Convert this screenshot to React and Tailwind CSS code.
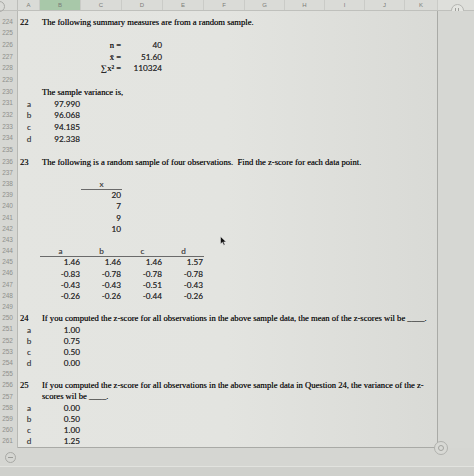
import React from "react";

const COLS = [
  { key: "A", w: "w-[22px]" },
  { key: "B", w: "w-[41px]" },
  { key: "C", w: "w-[41px]" },
  { key: "D", w: "w-[41px]" },
  { key: "E", w: "w-[41px]" },
  { key: "F", w: "w-[41px]" },
  { key: "G", w: "w-[40px]" },
  { key: "H", w: "w-[40px]" },
  { key: "I", w: "w-[40px]" },
  { key: "J", w: "w-[40px]" },
  { key: "K", w: "w-[33px]" },
];

const serif = "font-['Liberation_Serif',serif] text-[8.6px] text-[#1c1c1c] [text-shadow:0_0_0.5px_#333]";
const num = "font-['Lato',sans-serif] text-[8.2px] text-[#333] [text-shadow:0_0_0.4px_#555]";
const letter = "font-['Lato',sans-serif] text-[8.2px] text-[#4a4a4a] [text-shadow:0_0_0.4px_#777]";

const opt = (l, v) => [
  { c: 0, t: l, cls: letter, a: "c" },
  { c: 1, t: v, cls: num, a: "r" },
];

const zrow = (vals) => vals.map((v, i) => ({ c: i + 1, t: v, cls: num, a: "r" }));

const ROWS = [
  [
    { c: 0, t: "22", cls: serif, pl: true },
    { c: 1, t: "The following summary measures are from a random sample.", cls: serif, pl: true },
  ],
  [],
  [
    { c: 2, t: "n =", cls: serif, a: "r" },
    { c: 3, t: "40", cls: num, a: "r" },
  ],
  [
    { c: 2, t: "x\u0304 =", cls: serif, a: "r" },
    { c: 3, t: "51.60", cls: num, a: "r" },
  ],
  [
    { c: 2, t: "\u2211x\u00b2 =", cls: serif, a: "r" },
    { c: 3, t: "110324", cls: num, a: "r" },
  ],
  [],
  [{ c: 1, t: "The sample variance is,", cls: serif, pl: true }],
  opt("a", "97.990"),
  opt("b", "96.068"),
  opt("c", "94.185"),
  opt("d", "92.338"),
  [],
  [
    { c: 0, t: "23", cls: serif, pl: true },
    {
      c: 1,
      t: "The following is a random sample of four observations.\u00a0 Find the z-score for each data point.",
      cls: serif,
      pl: true,
    },
  ],
  [],
  [{ c: 2, t: "x", cls: letter, a: "c", line: true }],
  [{ c: 2, t: "20", cls: num, a: "r" }],
  [{ c: 2, t: "7", cls: num, a: "r" }],
  [{ c: 2, t: "9", cls: num, a: "r" }],
  [{ c: 2, t: "10", cls: num, a: "r" }],
  [],
  ["a", "b", "c", "d"].map((v, i) => ({ c: i + 1, t: v, cls: letter, a: "c", line: true })),
  zrow(["1.46", "1.46", "1.46", "1.57"]),
  zrow(["-0.83", "-0.78", "-0.78", "-0.78"]),
  zrow(["-0.43", "-0.43", "-0.51", "-0.43"]),
  zrow(["-0.26", "-0.26", "-0.44", "-0.26"]),
  [],
  [
    { c: 0, t: "24", cls: serif, pl: true },
    {
      c: 1,
      t: "If you computed the z-score for all observations in the above sample data, the mean of the z-scores wil be ____.",
      cls: serif,
      pl: true,
    },
  ],
  opt("a", "1.00"),
  opt("b", "0.75"),
  opt("c", "0.50"),
  opt("d", "0.00"),
  [],
  [
    { c: 0, t: "25", cls: serif, pl: true },
    {
      c: 1,
      t: "If you computed the z-score for all observations in the above sample data in Question 24, the variance of the z-",
      cls: serif,
      pl: true,
    },
  ],
  [{ c: 1, t: "scores wil be ____.", cls: serif, pl: true }],
  opt("a", "0.00"),
  opt("b", "0.50"),
  opt("c", "1.00"),
  opt("d", "1.25"),
];

function rowHeight(i) {
  return i < 12 ? "h-[11.7px]" : "h-[11.2px]";
}

function Cell({ col, cell }) {
  const align = !cell ? "" : cell.a === "r" ? "justify-end pr-[1px]" : cell.a === "c" ? "justify-center" : "justify-start";
  return (
    <div
      className={`${col.w} shrink-0 h-full flex items-center ${align} ${cell && cell.pl ? "pl-[2px]" : ""} ${
        cell && cell.line ? "border-b border-[#6a6a6a]" : ""
      }`}
    >
      {cell && <span className={`${cell.cls} leading-none whitespace-nowrap`}>{cell.t}</span>}
    </div>
  );
}

function SheetRow({ cells, index }) {
  return (
    <div className={`flex ${rowHeight(index)}`}>
      {COLS.map((col, ci) => (
        <Cell key={col.key} col={col} cell={cells.find((c) => c.c === ci)} />
      ))}
    </div>
  );
}

function Cursor() {
  return (
    <svg className="absolute left-[220px] top-[236px]" width="7" height="10" viewBox="0 0 7 10">
      <path d="M0.5 0.5 L0.5 8 L2.4 6.3 L3.8 9.3 L5 8.8 L3.7 5.9 L6.2 5.9 Z" fill="#111" stroke="#eee" strokeWidth="0.5" />
    </svg>
  );
}

export default function App() {
  return (
    <div className="w-[474px] h-[476px] relative overflow-hidden bg-[#d3d4d0] flex flex-col">
      {/* column header */}
      <div className="flex h-[11px] bg-[#dadbd7] border-b border-[#bfc0bc]">
        <div className="w-[18px] shrink-0 relative border-r border-[#bdbeba]">
          <div className="absolute -left-[6px] top-[1px] w-[11px] h-[11px] rounded-full border border-[#a9aaa6]" />
        </div>
        {COLS.map((col) => (
          <div
            key={col.key}
            className={`${col.w} shrink-0 flex justify-center pt-[2px] border-r border-[#cacbc7] ${
              col.key === "B" ? "bg-[#a8c8a9]" : ""
            }`}
          >
            <span className="font-['Liberation_Sans',sans-serif] text-[6px] leading-none text-[#7a7b78]">{col.key}</span>
          </div>
        ))}
        <div className="flex-1 flex items-start justify-center pt-[4px] pl-[2px] bg-[#dedfdb]">
          <div className="w-[13px] h-[13px] rounded-full border border-[#b4b5b1] bg-[#e4e5e1] flex items-center justify-center gap-[1.5px]">
            <div className="w-[1px] h-[5px] bg-[#a0a19d]" />
            <div className="w-[1px] h-[5px] bg-[#a0a19d]" />
          </div>
        </div>
      </div>

      {/* body */}
      <div className="flex">
        <div className="w-[18px] shrink-0 pt-[5px] pr-[4px] bg-[#d6d7d3] border-r border-[#b8b9b5] flex flex-col">
          {ROWS.map((_, i) => (
            <div key={i} className={`${rowHeight(i)} flex items-center justify-end`}>
              <span className="font-['Liberation_Sans',sans-serif] text-[6.5px] leading-none text-[#8f908c] whitespace-nowrap">
                {224 + i}
              </span>
            </div>
          ))}
        </div>
        <div className="w-[420px] shrink-0 pt-[5px] bg-gradient-to-r from-[#e4e5e1] via-[#e3e4e0] to-[#d9dad6] border-r border-b border-[#a9aaa6] flex flex-col">
          {ROWS.map((cells, i) => (
            <SheetRow key={i} cells={cells} index={i} />
          ))}
        </div>
        <div className="flex-1 bg-[#d6d7d3]" />
      </div>

      {/* bottom bar */}
      <div className="h-[19px] shrink-0 flex items-center pl-[5px] bg-[#d5d6d2] border-b border-[#e2e3df]">
        <div className="w-[11px] h-[11px] rounded-full border border-[#a8a9a5] flex items-center justify-center">
          <div className="w-[5px] h-[1px] bg-[#9a9b97]" />
        </div>
      </div>
      <div className="flex-1 bg-[#cfd0cc]" />

      {/* floating corner button */}
      <div className="absolute left-[434px] top-[441px] w-[14px] h-[14px] rounded-full border border-[#b0b1ad] bg-[#d8d9d5] flex items-center justify-center">
        <div className="w-[6px] h-[6px] rounded-full border border-[#a3a4a0]" />
      </div>

      <Cursor />
    </div>
  );
}
